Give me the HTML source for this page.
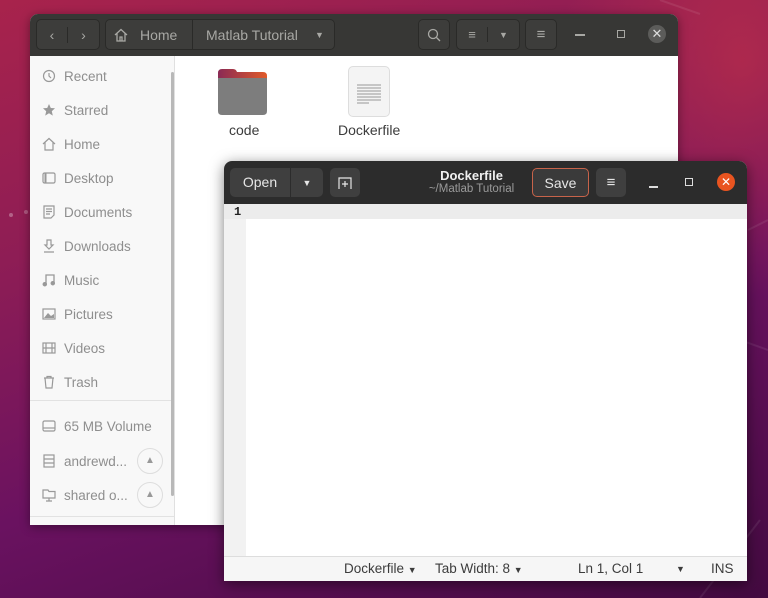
<!DOCTYPE html>
<html><head><meta charset="utf-8"><style>
*{margin:0;padding:0;box-sizing:border-box}
body{width:768px;height:598px;overflow:hidden;position:relative;font-family:"Liberation Sans",sans-serif;
background:linear-gradient(160deg,#a8234c 0%,#8e1d55 30%,#6a1260 60%,#430a40 100%);}
.bgA{position:absolute;left:560px;top:0;width:260px;height:300px;background:radial-gradient(ellipse at 70% 20%,rgba(200,50,70,.6),transparent 70%)}
.abs{position:absolute}
.fw{left:30px;top:14px;width:648px;height:511px;background:#fff;border-radius:8px 8px 0 0;overflow:hidden;box-shadow:0 2px 10px rgba(0,0,0,.4)}
.fh{height:42px;background:#373735;position:relative}
.btn{position:absolute;top:5px;height:31px;border:1px solid #2a2a28;border-radius:5px;background:#3d3d3b;color:#a8a8a4;font-size:14px;display:flex;align-items:center;justify-content:center}
.sb{position:absolute;left:0;top:42px;width:145px;bottom:0;background:#f8f8f8;border-right:1px solid #e0e0e0}
.it{position:absolute;left:12px;font-size:13.5px;color:#8e8e8e;display:flex;align-items:center;height:20px}
.it svg{margin-right:8px}
.ew{left:224px;top:161px;width:523px;height:420px;background:#fff;border-radius:8px 8px 0 0;overflow:hidden;box-shadow:0 3px 14px rgba(0,0,0,.5)}
.eh{height:43px;background:#2c2c2c;position:relative}
.eb{position:absolute;top:7px;height:29px;border-radius:5px;background:#3f3f3f;color:#e6e6e6;font-size:14px;display:flex;align-items:center;justify-content:center}
.st{position:absolute;top:400px;font-size:13.5px;color:#3c3c3c}
</style></head><body>
<div class="bgA"></div>
<svg class="abs" style="left:0;top:0" width="768" height="598"><g stroke="rgba(255,255,255,.08)" stroke-width="2" fill="none"><path d="M748 230 L768 220"/><path d="M740 340 L768 350"/><path d="M700 598 L760 520"/><path d="M660 0 L700 14"/></g><circle cx="11" cy="215" r="2" fill="rgba(255,255,255,.3)"/><circle cx="26" cy="212" r="2" fill="rgba(255,255,255,.25)"/></svg>

<div class="abs fw">
 <div class="fh">
  <div class="btn" style="left:6px;width:64px"><span style="width:32px;text-align:center;border-right:1px solid #2a2a28">&#x2039;</span><span style="width:32px;text-align:center">&#x203A;</span></div>
  <div class="btn" style="left:75px;width:230px;justify-content:flex-start">
   <svg style="margin-left:8px" width="14" height="14" viewBox="0 0 14 14" fill="none" stroke="#a8a8a4" stroke-width="1.3"><path d="M1 7 L7 1.5 L13 7 M3 5.5 V13 H11 V5.5 M6 13 V9 H8 V13"/></svg>
   <span style="margin-left:12px">Home</span>
   <span style="position:absolute;left:86px;top:0;bottom:0;border-left:1px solid #2a2a28"></span>
   <span style="position:absolute;left:100px">Matlab Tutorial</span>
   <span style="position:absolute;left:209px;font-size:9px">&#9660;</span>
  </div>
  <div class="btn" style="left:388px;width:32px"><svg width="14" height="14" fill="none" stroke="#a8a8a4" stroke-width="1.3"><circle cx="6" cy="6" r="4.5"/><path d="M9.5 9.5 L13 13"/></svg></div>
  <div class="btn" style="left:426px;width:64px"><span style="width:32px;text-align:center;border-right:1px solid #2a2a28;font-size:13px">&#8801;</span><span style="width:32px;text-align:center;font-size:9px">&#9660;</span></div>
  <div class="btn" style="left:495px;width:32px;font-size:15px">&#8801;</div>
  <div class="abs" style="left:545px;top:20px;width:10px;height:1.5px;background:#a8a8a4"></div>
  <div class="abs" style="left:587px;top:16px;width:8px;height:8px;border:1.3px solid #a8a8a4"></div>
  <div class="abs" style="left:618px;top:11px;width:18px;height:18px;border-radius:50%;background:#5c5c5a;color:#ddd;font-size:13px;text-align:center;line-height:18px">&#x2715;</div>
 </div>
 <div class="sb">
  <div class="it" style="top:10px"><svg width="14" height="14" fill="none" stroke="#999" stroke-width="1.2"><circle cx="7" cy="7" r="5.5"/><path d="M7 4 V7 L9 9"/></svg>Recent</div>
  <div class="it" style="top:44px"><svg width="14" height="14"><path d="M7 1 L8.8 5 L13 5.3 L9.8 8.2 L10.8 12.6 L7 10.3 L3.2 12.6 L4.2 8.2 L1 5.3 L5.2 5 Z" fill="#999"/></svg>Starred</div>
  <div class="it" style="top:78px"><svg width="14" height="14" fill="none" stroke="#999" stroke-width="1.2"><path d="M1 7 L7 1.5 L13 7 M3 5.5 V13 H11 V5.5"/></svg>Home</div>
  <div class="it" style="top:112px"><svg width="14" height="14" fill="none" stroke="#999" stroke-width="1.2"><rect x="1" y="2" width="12" height="10" rx="1.5"/><path d="M3.5 2 V12" stroke-width="2"/></svg>Desktop</div>
  <div class="it" style="top:146px"><svg width="14" height="14" fill="none" stroke="#999" stroke-width="1.2"><path d="M2 1 H12 V10 L9 13 H2 Z M4 4 H10 M4 6.5 H10 M4 9 H8"/></svg>Documents</div>
  <div class="it" style="top:180px"><svg width="14" height="14" fill="none" stroke="#999" stroke-width="1.2"><path d="M5 1 H9 V6 H11 L7 10 L3 6 H5 Z M2 13 H12"/></svg>Downloads</div>
  <div class="it" style="top:214px"><svg width="14" height="14" fill="none" stroke="#999" stroke-width="1.3"><path d="M4 11 V2 H12 V10"/><circle cx="2.8" cy="11.2" r="1.6" fill="#999"/><circle cx="10.8" cy="10.2" r="1.6" fill="#999"/></svg>Music</div>
  <div class="it" style="top:248px"><svg width="14" height="14"><rect x="1" y="2" width="12" height="10" fill="none" stroke="#999" stroke-width="1.2"/><path d="M2 11 L6 6 L9 9 L12 7 V11 Z" fill="#999"/></svg>Pictures</div>
  <div class="it" style="top:282px"><svg width="14" height="14" fill="none" stroke="#999" stroke-width="1.2"><rect x="1" y="2" width="12" height="10"/><path d="M4 2 V12 M10 2 V12 M1 7 H13"/></svg>Videos</div>
  <div class="it" style="top:316px"><svg width="14" height="14" fill="none" stroke="#999" stroke-width="1.2"><path d="M2 3 H12 M5 3 V1.5 H9 V3 M3 3 L4 13 H10 L11 3"/></svg>Trash</div>
  <div class="abs" style="left:0;right:0;top:344px;border-top:1px solid #e2e2e2"></div>
  <div class="it" style="top:360px"><svg width="14" height="14" fill="none" stroke="#999" stroke-width="1.2"><rect x="1" y="2" width="12" height="10" rx="1.5"/><path d="M1 9 H13"/></svg>65 MB Volume</div>
  <div class="it" style="top:395px"><svg width="14" height="14" fill="none" stroke="#999" stroke-width="1.2"><rect x="2" y="1" width="10" height="12"/><path d="M2 5 H12 M2 9 H12"/></svg>andrewd...</div>
  <div class="it" style="top:429px"><svg width="14" height="14" fill="none" stroke="#999" stroke-width="1.2"><path d="M1 2 H6 L7 3.5 H13 V10 H1 Z M7 10 V13 M4 13 H10"/></svg>shared o...</div>
  <div class="abs" style="left:107px;top:392px;width:26px;height:26px;border:1px solid #ddd;border-radius:50%;color:#999;font-size:10px;text-align:center;line-height:24px">&#9650;</div>
  <div class="abs" style="left:107px;top:426px;width:26px;height:26px;border:1px solid #ddd;border-radius:50%;color:#999;font-size:10px;text-align:center;line-height:24px">&#9650;</div>
  <div class="abs" style="left:0;right:0;top:460px;border-top:1px solid #e2e2e2"></div>
  <div class="abs" style="left:141px;top:16px;width:3px;height:424px;background:#b8b8b8;border-radius:2px"></div>
 </div>
 <svg class="abs" style="left:186px;top:53px" width="52" height="50"><path d="M2 6 Q2 2 6 2 H17 Q20 2 21 5 H47 Q51 5 51 9 V20 H2 Z" fill="url(#fg)"/><defs><linearGradient id="fg" x1="0" x2="1"><stop offset="0" stop-color="#8a2a55"/><stop offset="1" stop-color="#e05a2a"/></linearGradient></defs><path d="M2 11 H51 V44 Q51 48 47 48 H6 Q2 48 2 44 Z" fill="#7d7d7d"/></svg>
 <div class="abs" style="left:199px;top:108px;font-size:14px;color:#3c3c3c">code</div>
 <div class="abs" style="left:318px;top:52px;width:42px;height:51px;background:#f4f4f4;border:1px solid #ddd;border-radius:5px"><svg width="42" height="51"><g stroke="#999" stroke-width="1"><path d="M8 18 H32 M8 21 H32 M8 24 H32 M8 27 H32 M8 30 H32 M8 33 H32 M8 36 H20"/></g></svg></div>
 <div class="abs" style="left:308px;top:108px;font-size:14px;color:#3c3c3c">Dockerfile</div>
</div>

<div class="abs ew">
 <div class="eh">
  <div class="eb" style="left:6px;width:93px;justify-content:flex-start"><span style="width:61px;text-align:center;border-right:1px solid #2c2c2c;line-height:29px">Open</span><span style="width:32px;text-align:center;font-size:9px">&#9660;</span></div>
  <div class="eb" style="left:106px;width:30px"><svg width="14" height="14" fill="none" stroke="#e6e6e6" stroke-width="1.2"><path d="M1 13 V2 H13 V13 M7 5 V11 M4 8 H10"/></svg></div>
  <div class="abs" style="left:180px;top:7px;width:135px;text-align:center;color:#f0f0f0;font-size:13px;font-weight:bold">Dockerfile</div>
  <div class="abs" style="left:180px;top:22px;width:135px;text-align:center;color:#9a9a9a;font-size:11.5px">~/Matlab Tutorial</div>
  <div class="eb" style="left:308px;width:57px;border:1.5px solid #c7634a;background:#3a3a3a">Save</div>
  <div class="eb" style="left:372px;width:30px;font-size:15px">&#8801;</div>
  <div class="abs" style="left:425px;top:25px;width:9px;height:1.5px;background:#ddd"></div>
  <div class="abs" style="left:461px;top:17px;width:8px;height:8px;border:1.3px solid #ddd"></div>
  <div class="abs" style="left:493px;top:12px;width:18px;height:18px;border-radius:50%;background:#e95420;color:#fff;font-size:12px;text-align:center;line-height:18px">&#x2715;</div>
 </div>
 <div class="abs" style="left:0;top:43px;width:22px;height:352px;background:#f2f2f2"></div>
 <div class="abs" style="left:0;top:43px;width:523px;height:15px;background:#ececec"></div>
 <div class="abs" style="left:10px;top:44px;font-size:12px;font-weight:bold;font-family:'Liberation Mono',monospace;color:#222">1</div>
 <div class="abs" style="left:0;top:395px;width:523px;height:25px;background:#f6f6f6;border-top:1px solid #ddd"></div>
 <div class="st" style="left:120px">Dockerfile <span style="font-size:9px">&#9660;</span></div>
 <div class="st" style="left:211px">Tab Width: 8 <span style="font-size:9px">&#9660;</span></div>
 <div class="st" style="left:354px">Ln 1, Col 1</div>
 <div class="st" style="left:452px;font-size:9px;top:403px">&#9660;</div>
 <div class="st" style="left:487px">INS</div>
</div>
</body></html>
